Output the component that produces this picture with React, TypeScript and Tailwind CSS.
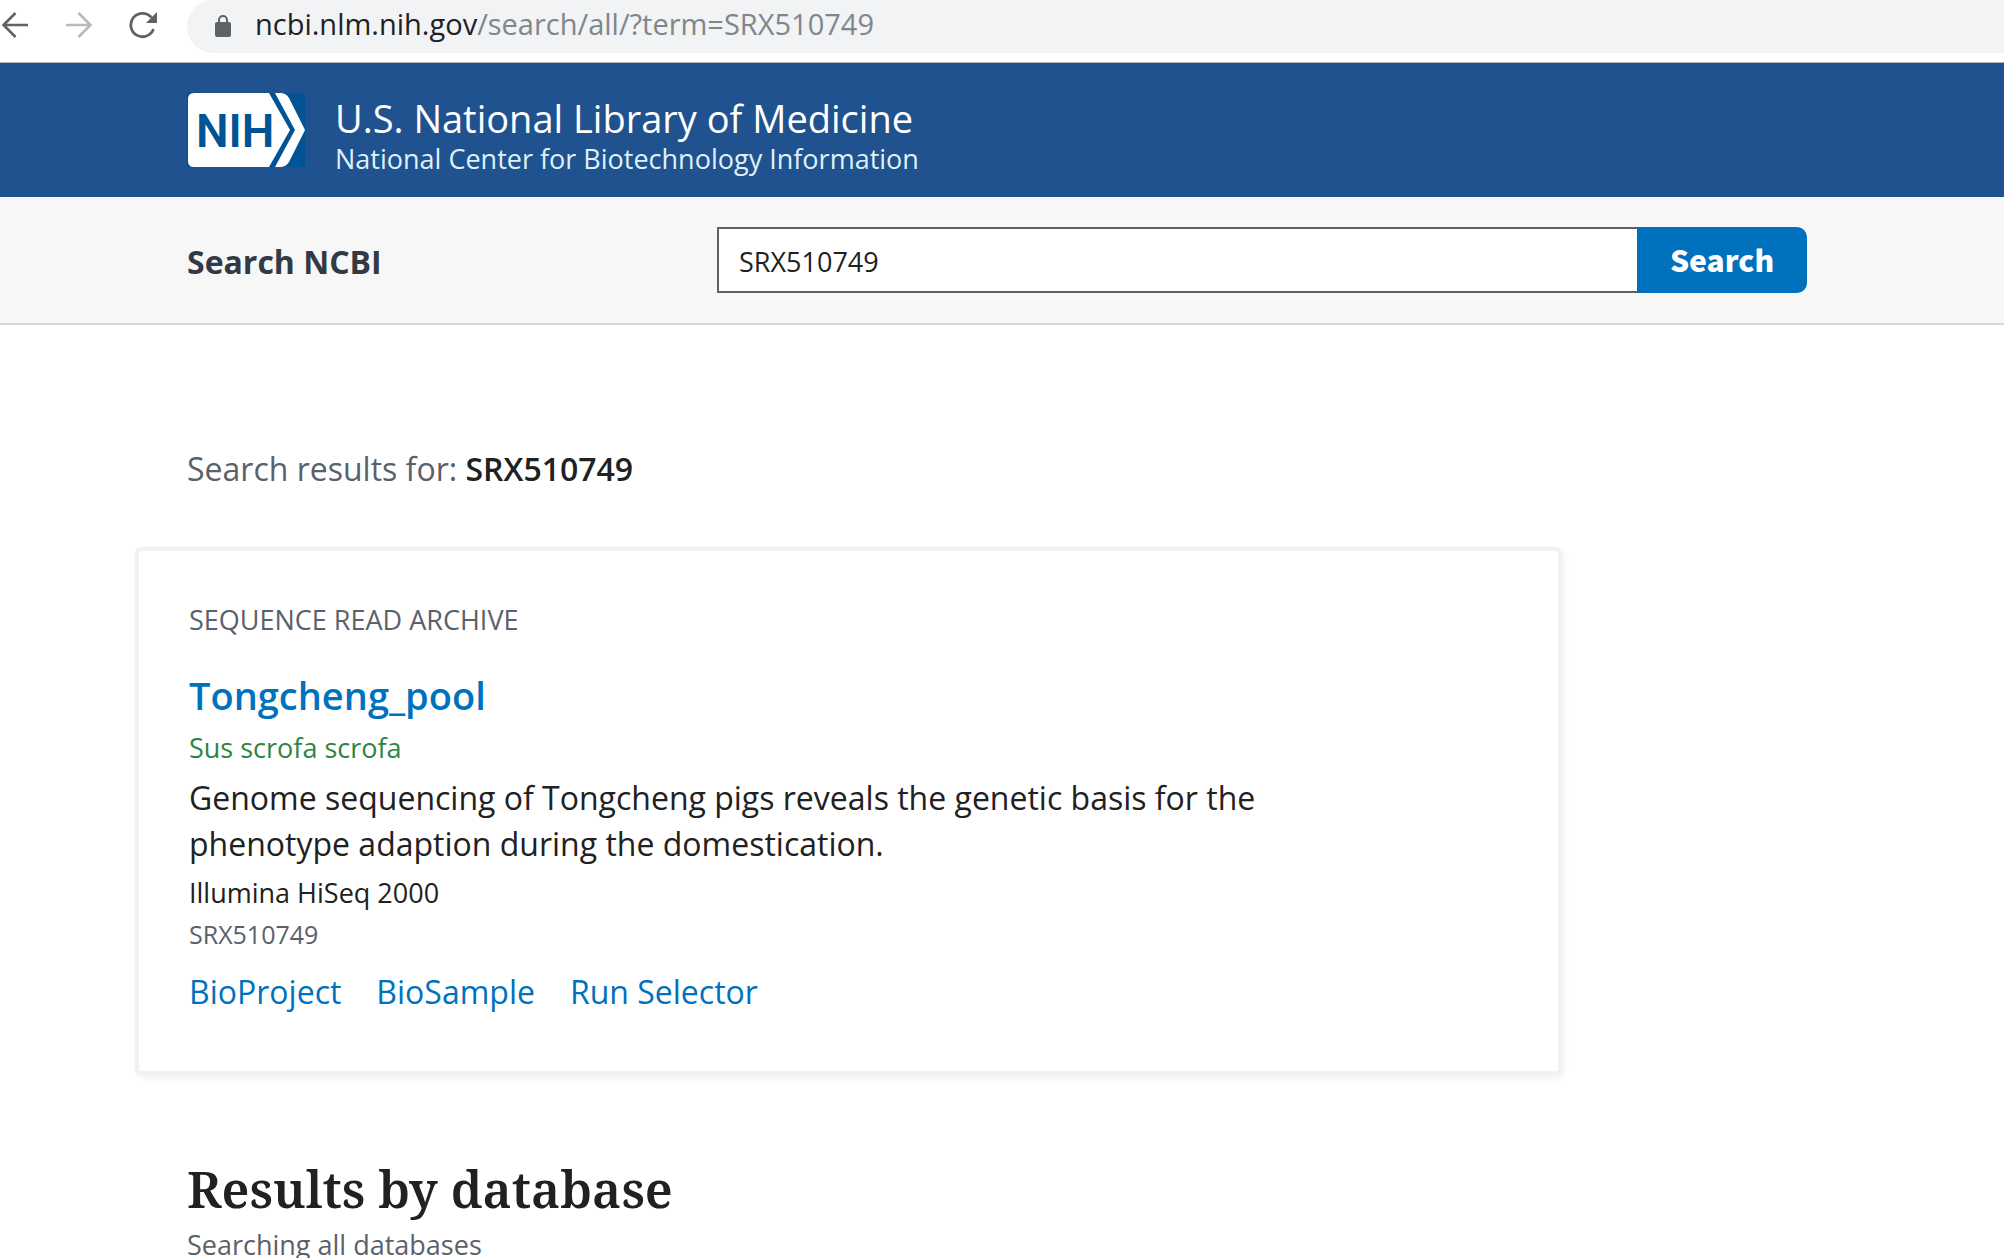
import React, { useState } from "react";

const term = "SRX510749";

const links = [
  { label: "BioProject", href: "#bioproject" },
  { label: "BioSample", href: "#biosample" },
  { label: "Run Selector", href: "#run-selector" },
];

function NihLogo() {
  return (
    <svg width="118" height="74" viewBox="0 0 118 74" role="img" aria-label="NIH" className="shrink-0">
      <rect width="118" height="74" fill="#005496" />
      <path d="M7 0H82L103 37L82 74H7Q1 74 1 68V6Q1 0 7 0Z" fill="#fff" />
      <path d="M88 0H93Q99 0 102 5L118 37L102 69Q99 74 93 74H88L108 37Z" fill="#fff" />
      <text x="9" y="54" fontSize="46" fontWeight="600" fill="#005496" fontFamily="Roboto, Arial, sans-serif">NIH</text>
    </svg>
  );
}

function BrowserBar() {
  return (
    <div className="flex h-[63px] items-start border-b border-[#b4b4b4] bg-white text-[#5f6368]">
      <div className="flex h-[50px] w-[187px] shrink-0 items-center">
        <button aria-label="Back" className="w-[64px]">
          <svg width="30" height="26" viewBox="0 0 30 26" fill="none" stroke="currentColor" strokeWidth="2.6">
            <path d="M28 13H4M15.500 1L3.500 13L15.500 25" />
          </svg>
        </button>
        <button aria-label="Forward" className="w-[64px] text-[#bababa]">
          <svg width="30" height="26" viewBox="0 0 30 26" fill="none" stroke="currentColor" strokeWidth="2.6">
            <path d="M2 13H26M14.500 1L26.500 13L14.500 25" />
          </svg>
        </button>
        <button aria-label="Reload">
          <svg width="30" height="28" viewBox="0 0 30 28" fill="none">
            <path d="M25.500 18A11.700 11.700 0 1 1 23.500 6.500" stroke="currentColor" strokeWidth="2.8" />
            <path d="M29 1V12H18Z" fill="currentColor" />
          </svg>
        </button>
      </div>
      <div className="flex h-[53px] flex-1 items-center rounded-l-full bg-[#f1f3f4] pb-[2px] pl-7">
        <svg width="16" height="22" viewBox="0 0 16 22" className="shrink-0">
          <rect y="7" width="16" height="15" rx="2" fill="#5f6368" />
          <path d="M4 8V5A4 4 0 0 1 12 5V8" fill="none" stroke="#5f6368" strokeWidth="2" />
        </svg>
        <span className="ml-6 pb-1 text-[29px] leading-[40px] text-[#202124]">
          ncbi.nlm.nih.gov<span className="text-[#80868b]">/search/all/?term={term}</span>
        </span>
      </div>
    </div>
  );
}

function Header() {
  return (
    <header className="flex h-[134px] items-start bg-[#215290] pl-[187px] pt-[30px]">
      <NihLogo />
      <a href="#home" className="ml-[30px] mt-[5px] block text-white">
        <span className="block text-[38px] leading-[40px]">U.S. National Library of Medicine</span>
        <span className="block text-[27px] leading-[42px] text-[#dff1f8]">National Center for Biotechnology Information</span>
      </a>
    </header>
  );
}

function SearchBar() {
  const [value, setValue] = useState(term);

  return (
    <div className="border-b-2 border-[#d6d7d9] bg-[#f7f7f7] py-[30px] pl-[187px] pr-4">
      <form onSubmit={(e) => e.preventDefault()} className="flex max-w-[1620px] items-center">
        <label htmlFor="term" className="w-[530px] shrink-0 pt-1 text-[32px] font-bold text-[#323a45]">Search NCBI</label>
        <input
          id="term"
          value={value}
          onChange={(e) => setValue(e.target.value)}
          className="h-[66px] min-w-0 flex-1 border-2 border-r-0 border-[#5b616b] bg-white px-5 pt-[2px] text-[27px] text-[#212121] outline-none"
        />
        <button type="submit" className="h-[66px] w-[170px] rounded-r-[10px] bg-[#0071bc] pb-[2px] font-['Noto_Sans_CJK_SC','Open_Sans',sans-serif] text-[30px] font-black text-white">
          Search
        </button>
      </form>
    </div>
  );
}

function ResultCard() {
  return (
    <section className="ml-[135px] mt-[54px] max-w-[1427px] rounded-md border-4 border-[#f1f1f1] px-[50px] pb-[55px] pt-[49px] shadow-[2px_3px_6px_rgba(0,0,0,0.06)]">
      <p className="text-[27px] leading-[40px] text-[#5b616b]">SEQUENCE READ ARCHIVE</p>
      <h2 className="mt-[27px] text-[38px] font-semibold leading-[56px]">
        <a href="#pool" className="text-[#0071bc]">Tongcheng_pool</a>
      </h2>
      <p className="mt-[5px] text-[27px] leading-[40px] text-[#2e8540]">Sus scrofa scrofa</p>
      <p className="mt-[7px] max-w-[1120px] text-[32px] leading-[46px]">
        Genome sequencing of Tongcheng pigs reveals the genetic basis for the phenotype adaption during the domestication.
      </p>
      <p className="mt-[6px] text-[27px] leading-[40px]">Illumina HiSeq 2000</p>
      <p className="mt-px text-[25px] leading-[40px] text-[#5b616b]">{term}</p>
      <div className="mt-[14px] flex gap-[35px] text-[32px] leading-[48px] text-[#0071bc]">
        {links.map((link) => (
          <a key={link.label} href={link.href}>{link.label}</a>
        ))}
      </div>
    </section>
  );
}

export default function App() {
  return (
    <div className="h-screen overflow-hidden bg-white font-['Open_Sans','Noto_Sans',sans-serif] text-[#212121]">
      <BrowserBar />
      <Header />
      <SearchBar />
      <main>
        <h1 className="pl-[187px] pt-[120px] text-[32px] leading-[48px] text-[#5b616b]">
          Search results for: <span className="font-semibold text-[#212121]">{term}</span>
        </h1>
        <ResultCard />
        <div className="pl-[187px] pt-[84px]">
          <h2 className="font-['Noto_Serif','DejaVu_Serif',serif] text-[50px] font-semibold leading-[60px]">Results by database</h2>
          <p className="mt-[6px] text-[27px] leading-[40px] text-[#5b616b]">Searching all databases</p>
        </div>
      </main>
    </div>
  );
}
